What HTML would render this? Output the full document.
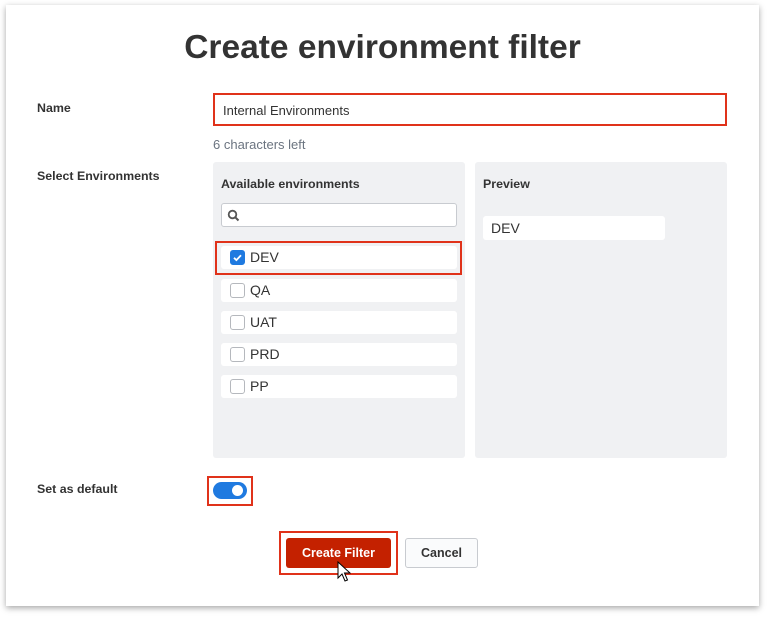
<!DOCTYPE html><html><head><style>
body{margin:0;width:773px;height:621px;background:#fff;font-family:"Liberation Sans",sans-serif;position:relative;overflow:hidden}
.card{position:absolute;left:6px;top:5px;width:753px;height:601px;background:#fff;box-shadow:0 2px 6px rgba(0,0,0,.35)}
.a{position:absolute}
.lbl{font-size:12.4px;font-weight:bold;color:#333}
.item{position:absolute;left:221px;width:236px;height:23px;background:#fff;border-radius:3px;font-size:14px;color:#333}
.item .cb{position:absolute;left:9px;top:4px;width:13px;height:13px;border:1px solid #b5b8bd;border-radius:3px;background:#fff}
.item span{position:absolute;left:29px;top:3px}
</style></head><body>
<div class="card"></div>
<div class="a" style="left:0;width:765px;top:29px;text-align:center;font-size:33.5px;font-weight:bold;color:#333">Create environment filter</div>
<div class="a lbl" style="left:37px;top:101px">Name</div>
<div class="a" style="left:213px;top:93px;width:510px;height:29px;border:2px solid #e0321a;font-size:13px;color:#333"><span style="position:absolute;left:8px;top:8px">Internal Environments</span></div>
<div class="a" style="left:213px;top:137px;font-size:13px;color:#6b7480">6 characters left</div>
<div class="a lbl" style="left:37px;top:169px">Select Environments</div>
<div class="a" style="left:213px;top:162px;width:252px;height:296px;background:#f0f1f3;border-radius:3px"></div>
<div class="a" style="left:475px;top:162px;width:252px;height:296px;background:#f0f1f3;border-radius:3px"></div>
<div class="a lbl" style="left:221px;top:177px">Available environments</div>
<div class="a lbl" style="left:483px;top:177px">Preview</div>
<div class="a" style="left:221px;top:203px;width:234px;height:22px;background:#fff;border:1px solid #c8cbd0;border-radius:3px">
<svg class="a" style="left:5px;top:5px" width="13" height="13" viewBox="0 0 13 13"><circle cx="5.5" cy="5.5" r="3.8" fill="none" stroke="#555" stroke-width="1.8"/><line x1="8.3" y1="8.3" x2="11.5" y2="11.5" stroke="#555" stroke-width="2"/></svg></div>
<div class="a" style="left:215px;top:241px;width:243px;height:30px;border:2px solid #e0321a"></div>
<div class="item" style="top:246px"><div class="cb" style="background:#1f7ae0;border-color:#1f7ae0"><svg width="13" height="13" viewBox="0 0 13 13" style="position:absolute;left:0;top:0"><path d="M3 6.8l2.4 2.3 4.6-4.8" fill="none" stroke="#fff" stroke-width="1.8"/></svg></div><span>DEV</span></div>
<div class="item" style="top:279px"><div class="cb"></div><span>QA</span></div>
<div class="item" style="top:311px"><div class="cb"></div><span>UAT</span></div>
<div class="item" style="top:343px"><div class="cb"></div><span>PRD</span></div>
<div class="item" style="top:375px"><div class="cb"></div><span>PP</span></div>
<div class="a" style="left:483px;top:216px;width:182px;height:24px;background:#fff;border-radius:3px;font-size:14px;color:#333"><span style="position:absolute;left:8px;top:4px">DEV</span></div>
<div class="a lbl" style="left:37px;top:482px">Set as default</div>
<div class="a" style="left:207px;top:476px;width:42px;height:26px;border:2px solid #e0321a"></div>
<div class="a" style="left:213px;top:482px;width:34px;height:17px;background:#1f7ae0;border-radius:9px"><div class="a" style="left:19px;top:3px;width:11px;height:11px;background:#fff;border-radius:50%"></div></div>
<div class="a" style="left:279px;top:531px;width:115px;height:40px;border:2px solid #e0321a"></div>
<div class="a" style="left:286px;top:538px;width:105px;height:30px;background:#c42100;border-radius:3px;color:#fff;font-size:12.5px;font-weight:bold;text-align:center;line-height:30px">Create Filter</div>
<div class="a" style="left:405px;top:538px;width:71px;height:28px;background:#fafbfc;border:1px solid #c8cbd0;border-radius:3px;color:#333;font-size:12.5px;font-weight:bold;text-align:center;line-height:28px">Cancel</div>
<svg class="a" style="left:337px;top:561px" width="14" height="22" viewBox="0 0 14 22"><path d="M1 1v16l4-4 3 7 2.5-1-3-7h5.5z" fill="#fff" stroke="#000" stroke-width="1"/></svg>
</body></html>
